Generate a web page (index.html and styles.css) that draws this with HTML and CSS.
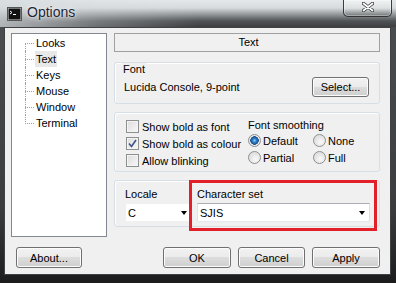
FILE: index.html
```html
<!DOCTYPE html>
<html lang="en">
<head>
    <meta charset="UTF-8">
    <title>Options</title>
    <link rel="stylesheet" href="styles.css">
</head>
<body>
    <div class="window">
        <div class="titlebar">
            <svg class="app-icon" width="15" height="14" viewBox="0 0 15 14">
                <rect x="0.5" y="0.5" width="14" height="13" fill="#d8d8d8" stroke="#555"/>
                <rect x="1.5" y="1.5" width="12" height="11" fill="#111"/>
                <path d="M3 4 L5 5.5 L3 7" fill="none" stroke="#fff" stroke-width="1"/>
                <path d="M6 7.5 H9" stroke="#fff" stroke-width="1"/>
            </svg>
            <span class="title">Options</span>
            <div class="close-btn">
                <svg width="12" height="10" viewBox="0 0 12 10">
                    <path d="M1.5 1.5 L10.5 8.5 M10.5 1.5 L1.5 8.5" stroke="#333" stroke-width="3.4" stroke-linecap="round"/>
                    <path d="M1.5 1.5 L10.5 8.5 M10.5 1.5 L1.5 8.5" stroke="#fff" stroke-width="1.8" stroke-linecap="round"/>
                </svg>
            </div>
        </div>

        <div class="frame">
            <div class="client">
                <div class="main">
                    <div class="tree">
                        <ul>
                            <li>Looks</li>
                            <li><span class="selected">Text</span></li>
                            <li>Keys</li>
                            <li>Mouse</li>
                            <li>Window</li>
                            <li>Terminal</li>
                        </ul>
                    </div>

                    <div class="pane">
                        <div class="pane-title">Text</div>

                        <div class="group font-group">
                            <span class="legend">Font</span>
                            <div class="font-row">
                                <span>Lucida Console, 9-point</span>
                                <button class="btn select-btn">Select...</button>
                            </div>
                        </div>

                        <div class="group opts-group">
                            <div class="checks">
                                <label class="check-row"><span class="checkbox"></span>Show bold as font</label>
                                <label class="check-row"><span class="checkbox checked">
                                    <svg width="9" height="9" viewBox="0 0 9 9"><path d="M1 4.5 L3.5 7.5 L8 1" fill="none" stroke="#3d5289" stroke-width="1.6"/></svg>
                                </span>Show bold as colour</label>
                                <label class="check-row"><span class="checkbox"></span>Allow blinking</label>
                            </div>
                            <div class="smoothing">
                                <div class="smoothing-title">Font smoothing</div>
                                <div class="radios">
                                    <label class="radio-row"><span class="radio on"></span>Default</label>
                                    <label class="radio-row"><span class="radio"></span>None</label>
                                    <label class="radio-row"><span class="radio"></span>Partial</label>
                                    <label class="radio-row"><span class="radio"></span>Full</label>
                                </div>
                            </div>
                        </div>

                        <div class="group locale-group">
                            <div class="field locale-field">
                                <div class="field-label">Locale</div>
                                <div class="combo plain">C<span class="arrow"></span></div>
                            </div>
                            <div class="field charset-field">
                                <div class="field-label">Character set</div>
                                <div class="combo">SJIS<span class="arrow"></span></div>
                            </div>
                            <div class="highlight"></div>
                        </div>
                    </div>
                </div>

                <div class="buttons">
                    <button class="btn about-btn">About...</button>
                    <button class="btn ok-btn">OK</button>
                    <button class="btn cancel-btn">Cancel</button>
                    <button class="btn apply-btn">Apply</button>
                </div>
            </div>
        </div>
    </div>
</body>
</html>
```

FILE: styles.css
```css
* {
    box-sizing: border-box;
}

body {
    margin: 0;
    width: 396px;
    height: 283px;
    overflow: hidden;
    font-family: "Liberation Sans", Arial, sans-serif;
    font-size: 11px;
    color: #000;
    background-color: #2a2b2c;
}

.window {
    width: 396px;
    height: 283px;
    display: flex;
    flex-direction: column;
}

.titlebar {
    height: 27px;
    display: flex;
    align-items: flex-start;
    background:
        linear-gradient(to right, rgba(214, 219, 222, 0.75) 0%, rgba(214, 219, 222, 0.3) 25%, rgba(214, 219, 222, 0) 50%),
        linear-gradient(to bottom, #e4e8ea 0px, #d6dadc 8px, #8d9194 15px, #505356 21px, #3c3e40 27px);
}

.app-icon {
    margin: 7px 0 0 7px;
}

.title {
    margin: 4px 0 0 5px;
    font-size: 14px;
    color: #1c2536;
    text-shadow: 0 0 6px rgba(255, 255, 255, 0.9), 0 0 2px rgba(255, 255, 255, 0.8);
}

.close-btn {
    margin-left: auto;
    margin-right: 4px;
    width: 49px;
    height: 17px;
    border: 1px solid rgba(30, 30, 30, 0.85);
    border-top: none;
    border-radius: 0 0 5px 5px;
    background: linear-gradient(to bottom, rgba(255, 255, 255, 0.45), rgba(255, 255, 255, 0.15) 55%, rgba(0, 0, 0, 0.15));
    box-shadow: inset 0 0 0 1px rgba(255, 255, 255, 0.35);
    display: flex;
    justify-content: center;
    padding-top: 2px;
}

.frame {
    flex: 1;
    padding: 0 5px 8px 4px;
    background: linear-gradient(to bottom, #4a4d50 0%, #3a3c3e 70%, #1c1c1d 100%);
}

.client {
    width: 387px;
    height: 248px;
    background-color: #f0f0f0;
    border: 1px solid #3f4244;
    padding: 5px 10px 0 6px;
    display: flex;
    flex-direction: column;
}

.main {
    display: flex;
    gap: 7px;
}

/* tree view */

.tree {
    width: 96px;
    height: 204px;
    background-color: #fff;
    border: 1px solid #828790;
    padding-top: 1px;
}

.tree ul {
    list-style: none;
    margin: 0 0 0 13px;
    padding: 0;
}

.tree li {
    position: relative;
    height: 16px;
    line-height: 16px;
    padding-left: 11px;
}

.tree li::before {
    content: '';
    position: absolute;
    left: 0;
    top: 8px;
    width: 9px;
    border-top: 1px dotted #a0a0a0;
}

.tree li::after {
    content: '';
    position: absolute;
    left: 0;
    top: 0;
    bottom: 0;
    border-left: 1px dotted #a0a0a0;
}

.tree li:first-child::after {
    top: 8px;
}

.tree li:last-child::after {
    bottom: 7px;
}

.selected {
    display: inline-block;
    background-color: #e8e8e8;
    padding: 0 1px;
    margin-left: -1px;
}

/* right pane */

.pane {
    width: 266px;
    display: flex;
    flex-direction: column;
}

.pane-title {
    height: 19px;
    border: 1px solid #a0a0a0;
    text-align: center;
    line-height: 17px;
    padding-left: 3px;
}

.group {
    position: relative;
    border: 1px solid #d5dfe5;
    border-radius: 3px;
    box-shadow: inset 1px 1px 0 #fff;
}

.legend {
    display: inline-block;
    margin: -6px 0 0 6px;
    padding: 0 2px;
    line-height: 13px;
    background-color: #f0f0f0;
}

.font-group {
    margin-top: 10px;
    height: 42px;
}

.font-row {
    display: flex;
    align-items: center;
    justify-content: space-between;
    padding: 0 10px 0 9px;
    margin-top: 1px;
}

.opts-group {
    margin-top: 8px;
    height: 60px;
    display: flex;
    padding: 5px 0 0 11px;
}

.checks {
    width: 122px;
}

.check-row,
.radio-row {
    display: flex;
    align-items: center;
    height: 17px;
}

.checkbox {
    width: 13px;
    height: 13px;
    margin-right: 3px;
    border: 1px solid #8e8f8f;
    background: linear-gradient(135deg, #dcdcdc, #f8f8f8);
    box-shadow: inset 0 0 0 1px #f4f4f4;
    display: flex;
    align-items: center;
    justify-content: center;
}

.smoothing-title {
    height: 14px;
    line-height: 14px;
}

.radios {
    display: grid;
    grid-template-columns: 65px auto;
}

.radio {
    width: 13px;
    height: 13px;
    margin-right: 2px;
    border-radius: 50%;
    border: 1px solid #8e8f8f;
    background: radial-gradient(circle at 60% 65%, #fafafa 0, #e6e6e6 50%, #d6d6d6 100%);
}

.radio.on {
    background: radial-gradient(circle, #8fd0f5 0, #2b7cc6 2px, #1d4f8a 4px, #e8e8e8 4.5px, #f4f4f4 100%);
}

.locale-group {
    margin-top: 8px;
    height: 47px;
    display: flex;
    gap: 8px;
    padding: 7px 9px 0 10px;
}

.field-label {
    height: 13px;
    line-height: 13px;
    margin-bottom: 2px;
}

.locale-field {
    width: 64px;
}

.charset-field {
    flex: 1;
}

.combo {
    height: 19px;
    display: flex;
    align-items: center;
    justify-content: space-between;
    padding: 0 4px 0 2px;
    background-color: #fff;
    border: 1px solid #abadb3;
    border-color: #abadb3 #dbdfe6 #e3e9ef #e2e3ea;
}

.combo.plain {
    border-color: #f0f0f0;
    margin-right: -3px;
}

.arrow {
    width: 0;
    height: 0;
    border-left: 3.5px solid transparent;
    border-right: 3.5px solid transparent;
    border-top: 4px solid #000;
}

.highlight {
    position: absolute;
    left: 74px;
    top: -1px;
    width: 188px;
    height: 51px;
    border: 3px solid #e3202a;
}

/* buttons */

.buttons {
    display: flex;
    gap: 7px;
    margin-top: 10px;
}

.btn {
    height: 21px;
    padding: 0;
    font-family: inherit;
    font-size: 11px;
    color: #000;
    border: 1px solid #707070;
    border-radius: 3px;
    background: linear-gradient(to bottom, #f2f2f2 0%, #ebebeb 50%, #dddddd 50%, #cfcfcf 100%);
    box-shadow: inset 0 0 0 1px #fcfcfc;
}

.about-btn {
    width: 66px;
    margin-left: 5px;
    margin-right: auto;
}

.ok-btn,
.apply-btn {
    width: 68px;
}

.cancel-btn {
    width: 67px;
}

.select-btn {
    width: 57px;
    height: 20px;
}
```
